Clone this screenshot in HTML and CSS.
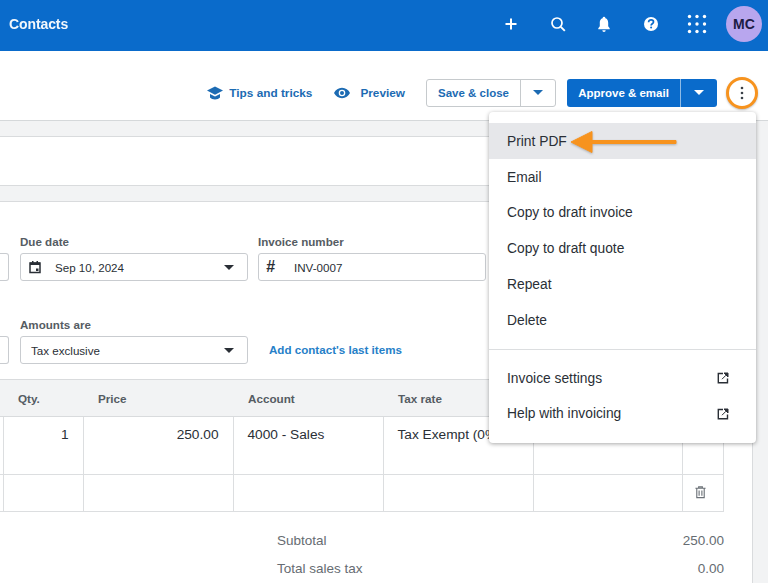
FILE: index.html
```html
<!DOCTYPE html>
<html lang="en">
<head>
<meta charset="utf-8">
<title>Invoice</title>
<link rel="stylesheet" href="styles.css">
</head>
<body>
<div class="page">
  <header class="topbar">
    <div class="brand">Contacts</div>
    <div class="top-icons">
      <svg class="ti" viewBox="0 0 24 24"><path d="M12 6.5v11M6.5 12h11" fill="none" stroke="#fff" stroke-width="2"/></svg>
      <svg class="ti" viewBox="0 0 24 24"><circle cx="11" cy="11" r="5" fill="none" stroke="#fff" stroke-width="1.7"/><path d="M14.8 14.8l4 4" stroke="#fff" stroke-width="1.9" fill="none"/></svg>
      <svg class="ti" viewBox="0 0 24 24"><path d="M12 6c-3 0-4.2 2.3-4.2 5v3.2L6.3 16.2v1h11.4v-1l-1.5-2V11c0-2.700-1.200-5-4.200-5z" fill="#fff"/><circle cx="12" cy="6" r="1.300" fill="#fff"/><path d="M10.300 18.200h3.400a1.700 1.700 0 0 1-3.400 0z" fill="#fff"/></svg>
      <svg class="ti" viewBox="0 0 24 24"><circle cx="12" cy="12" r="7" fill="#fff"/><path d="M9.600 10.200c0-1.500 1.100-2.300 2.500-2.300s2.400.8 2.400 2c0 1.800-2.400 1.800-2.400 3.500" fill="none" stroke="#0a6bcb" stroke-width="1.700"/><circle cx="12.100" cy="15.600" r="1" fill="#0a6bcb"/></svg>
      <svg class="ti" viewBox="0 0 24 24" fill="#fff"><circle cx="4.500" cy="4.500" r="1.700"/><circle cx="12" cy="4.500" r="1.700"/><circle cx="19.500" cy="4.500" r="1.700"/><circle cx="4.500" cy="12" r="1.700"/><circle cx="12" cy="12" r="1.700"/><circle cx="19.500" cy="12" r="1.700"/><circle cx="4.500" cy="19.500" r="1.700"/><circle cx="12" cy="19.500" r="1.700"/><circle cx="19.500" cy="19.500" r="1.700"/></svg>
      <div class="avatar">MC</div>
    </div>
  </header>

  <div class="actionbar">
    <a class="action-link">
      <svg class="ai" viewBox="0 0 16 16"><path d="M8 1.500L0 5.500l8 4.200 8-4.200z" fill="#1c6bb3"/><path d="M3 9v3.500c1 1.300 3 2 5 2s4-.7 5-2V9l-5 2.600z" fill="#1c6bb3"/></svg>
      <span>Tips and tricks</span>
    </a>
    <a class="action-link preview-link">
      <svg class="ai" viewBox="0 0 16 16"><path fill-rule="evenodd" d="M8 2.800C4.500 2.800 1.500 5 0 8c1.500 3 4.500 5.200 8 5.200s6.500-2.200 8-5.200c-1.500-3-4.500-5.200-8-5.200zm0 8.500A3.300 3.300 0 1 1 8 4.700a3.300 3.300 0 0 1 0 6.600z" fill="#1c6bb3"/><circle cx="8" cy="8" r="2" fill="#1c6bb3"/></svg>
      <span>Preview</span>
    </a>
    <div class="split split-light">
      <span class="split-label">Save &amp; close</span>
      <span class="split-arrow"><i class="caret caret-blue"></i></span>
    </div>
    <div class="split split-blue">
      <span class="split-label">Approve &amp; email</span>
      <span class="split-arrow"><i class="caret caret-white"></i></span>
    </div>
    <div class="kebab">
      <svg viewBox="0 0 4 14" class="kebab-dots"><circle cx="2" cy="2" r="1.300"/><circle cx="2" cy="7" r="1.300"/><circle cx="2" cy="12" r="1.300"/></svg>
    </div>
  </div>

  <main class="sheet">
    <div class="band band-one"></div>
    <div class="blank"></div>
    <div class="band band-two"></div>

    <section class="form">
      <div class="form-row">
        <div class="input stub"></div>
        <div class="field">
          <label class="label">Due date</label>
          <div class="input">
            <svg class="cal" viewBox="0 0 14 14"><path d="M2 3h10v9.500H2z" fill="none" stroke="#2a2f36" stroke-width="1.500"/><path d="M2 2.500h10V5H2zM4 1h1.500v2H4zM8.500 1H10v2H8.500zM8 8.500h2.500v2.500H8z" fill="#2a2f36"/></svg>
            <span class="val val-date">Sep 10, 2024</span>
            <i class="caret caret-dark"></i>
          </div>
        </div>
        <div class="field">
          <label class="label">Invoice number</label>
          <div class="input">
            <span class="hash">#</span>
            <span class="val">INV-0007</span>
          </div>
        </div>
      </div>
      <div class="form-row row-second">
        <div class="input stub"></div>
        <div class="field">
          <label class="label">Amounts are</label>
          <div class="input input-plain">
            <span class="val">Tax exclusive</span>
            <i class="caret caret-dark"></i>
          </div>
        </div>
        <a class="add-link">Add contact's last items</a>
      </div>
    </section>

    <table class="lines">
      <colgroup>
        <col class="c0"><col class="c1"><col class="c2"><col class="c2"><col class="c2"><col class="c5"><col class="c6">
      </colgroup>
      <thead>
        <tr><th></th><th>Qty.</th><th>Price</th><th>Account</th><th>Tax rate</th><th></th><th></th></tr>
      </thead>
      <tbody>
        <tr class="row-tall"><td></td><td class="num">1</td><td class="num">250.00</td><td>4000 - Sales</td><td class="clip">Tax Exempt (0%)</td><td></td><td></td></tr>
        <tr class="row-short"><td></td><td></td><td></td><td></td><td></td><td></td>
          <td class="trash-cell"><svg class="trash" viewBox="0 0 14 14"><path d="M1.500 3h11M5 3V1.500h4V3M3 3.500v9.500h8V3.500M5.500 5.500v5.500M8.500 5.500v5.500" fill="none" stroke="#6b7177" stroke-width="1.200"/></svg></td>
        </tr>
      </tbody>
    </table>

    <section class="totals">
      <div class="total-row"><span>Subtotal</span><span>250.00</span></div>
      <div class="total-row"><span>Total sales tax</span><span>0.00</span></div>
    </section>
  </main>

  <nav class="menu">
    <a class="item item-active">Print PDF</a>
    <a class="item">Email</a>
    <a class="item">Copy to draft invoice</a>
    <a class="item">Copy to draft quote</a>
    <a class="item">Repeat</a>
    <a class="item">Delete</a>
    <div class="divider"></div>
    <a class="item">Invoice settings
      <svg class="ext" viewBox="0 0 12 12"><path d="M6 1.500H1.300v9.200h9.200V6.500" fill="none" stroke="#2a2f36" stroke-width="1.400"/><path d="M5 7.200l4-4M7 1h4v4z" fill="#2a2f36" stroke="#2a2f36" stroke-width="1"/></svg>
    </a>
    <a class="item">Help with invoicing
      <svg class="ext" viewBox="0 0 12 12"><path d="M6 1.500H1.300v9.200h9.200V6.500" fill="none" stroke="#2a2f36" stroke-width="1.400"/><path d="M5 7.200l4-4M7 1h4v4z" fill="#2a2f36" stroke="#2a2f36" stroke-width="1"/></svg>
    </a>
  </nav>

  <svg class="arrow" viewBox="0 0 110 26"><path d="M1 13L22 2.500V11.500H106V14.500H22V23.500z" fill="#f7931e" stroke="#f7931e" stroke-linejoin="round"/></svg>
</div>
</body>
</html>
```

FILE: styles.css
```css
* { box-sizing: border-box; }
html, body { margin: 0; padding: 0; }
body {
  width: 768px;
  height: 583px;
  overflow: hidden;
  font-family: "Liberation Sans", Arial, sans-serif;
  color: #2a2f36;
  background: #f2f3f4;
}
.page { position: relative; width: 768px; height: 583px; overflow: hidden; }

.topbar {
  height: 51px;
  background: #0a6bcb;
  display: flex;
  align-items: center;
  justify-content: space-between;
  padding: 0 6px 3px 9px;
}
.brand { color: #fff; font-size: 14px; font-weight: 700; opacity: .95; letter-spacing: -.1px; }
.top-icons { display: flex; align-items: center; }
.ti { width: 24px; height: 24px; margin-right: 22.5px; display: block; }
.ti:nth-child(5) { margin-right: 17px; }
.avatar {
  width: 36px;
  height: 36px;
  border-radius: 50%;
  background: #b8a6ee;
  color: #1d1c44;
  font-size: 14px;
  font-weight: 700;
  display: flex;
  align-items: center;
  justify-content: center;
}

.actionbar {
  height: 70px;
  background: #fff;
  border-bottom: 1px solid #d5d8da;
  display: flex;
  align-items: center;
  justify-content: flex-end;
  padding: 14px 10px 0 0;
}
.action-link {
  display: flex;
  align-items: center;
  font-size: 11.8px;
  font-weight: 700;
  color: #1c6bb3;
  margin-right: 22px;
}
.ai { width: 16px; height: 16px; margin-right: 6px; display: block; }
.preview-link { margin-right: 21px; }
.preview-link .ai { margin-right: 10px; }
.split {
  height: 28px;
  display: flex;
  align-items: stretch;
  font-size: 11.5px;
  font-weight: 700;
  border-radius: 3px;
}
.split-light { width: 130px; border: 1px solid #c6cacd; color: #1c6bb3; background: #fff; margin-right: 11px; }
.split-light .split-label { width: 94px; border-right: 1px solid #c6cacd; }
.split-blue { width: 150px; background: #0a6bcb; color: #fff; margin-right: 9px; }
.split-blue .split-label { width: 114px; border-right: 1px solid #8fbbe6; }
.split-label { display: flex; align-items: center; justify-content: center; }
.split-arrow { flex: 1; display: flex; align-items: center; justify-content: center; }
.caret { display: block; width: 0; height: 0; border-left: 5px solid transparent; border-right: 5px solid transparent; border-top: 5px solid; }
.caret-blue { color: #1c6bb3; }
.caret-white { color: #fff; }
.caret-dark { color: #2a2f36; margin-left: auto; }

.kebab {
  width: 32px;
  height: 32px;
  border: 3px solid #f7931e;
  border-radius: 50%;
  background: #fff;
  display: flex;
  align-items: center;
  justify-content: center;
  box-shadow: 0 1px 2px rgba(0,0,0,.25);
}
.kebab-dots { width: 4px; height: 14px; fill: #3a4048; display: block; }

.sheet {
  width: 753px;
  height: 462px;
  background: #fff;
  border-right: 1px solid #d9dbdd;
  overflow: hidden;
}
.band { background: #f2f3f4; border-bottom: 1px solid #d9dbdd; }
.band-one { height: 16px; }
.blank { height: 48px; }
.band-two { height: 17px; border-top: 1px solid #d9dbdd; }

.form { height: 177px; padding-top: 32px; }
.form-row { display: flex; align-items: flex-end; height: 47px; }
.row-second { margin-top: 36px; }
.field { width: 228px; margin-right: 10px; flex: none; }
.label { display: block; font-size: 11.6px; line-height: 15px; font-weight: 700; color: #555c63; margin-bottom: 4px; }
.input {
  height: 28px;
  border: 1px solid #c9ccd0;
  border-radius: 3px;
  background: #fff;
  display: flex;
  align-items: center;
  padding: 0 13px 0 7px;
  font-size: 11.6px;
  color: #2a2f36;
}
.stub { width: 9px; margin-right: 11px; padding: 0; border-left: 0; border-radius: 0 3px 3px 0; flex: none; }
.input-plain { padding-left: 10px; }
.cal { width: 14px; height: 14px; flex: none; margin-right: 13px; display: block; }
.hash { font-size: 16px; font-style: italic; font-weight: 700; width: 28px; flex: none; }
.val { white-space: nowrap; }
.add-link { font-size: 11.6px; font-weight: 700; color: #2680c8; height: 28px; line-height: 28px; white-space: nowrap; margin-left: 11px; }

.lines { width: 723px; border-collapse: collapse; table-layout: fixed; font-size: 13.7px; }
.c0 { width: 3px; }
.c1 { width: 80px; }
.c2 { width: 150px; }
.c5 { width: 149px; }
.c6 { width: 41px; }
.lines th {
  height: 37px;
  background: #f2f3f4;
  border-top: 1px solid #d9dbdd;
  border-bottom: 1px solid #d9dbdd;
  text-align: left;
  font-size: 11.7px;
  font-weight: 700;
  color: #555c63;
  padding: 0 0 0 15px;
}
.lines th:first-child, .lines td:first-child { padding: 0; }
.lines td {
  border: 1px solid #dcdee0;
  vertical-align: top;
  padding: 10px 14px 9px;
  color: #2a2f36;
  white-space: nowrap;
  overflow: hidden;
}
.lines td:first-child { border-left: 0; }
.row-tall td { height: 58px; }
.row-short td { height: 37px; }
.lines td.num { text-align: right; }
.lines td.trash-cell { padding: 10px 4px 0 0; text-align: center; }
.trash { width: 13px; height: 14px; display: block; margin: 0 auto; }

.totals { width: 724px; padding: 21px 0 0 277px; }
.total-row {
  display: flex;
  justify-content: space-between;
  font-size: 13.5px;
  line-height: 16px;
  height: 28px;
  color: #666c72;
}

.menu {
  position: absolute;
  left: 489px;
  top: 112px;
  width: 267px;
  height: 331px;
  background: #fff;
  border-radius: 4px;
  box-shadow: 0 1px 4px rgba(0,0,0,.35);
  padding-top: 11px;
}
.item {
  height: 35.8px;
  display: flex;
  align-items: center;
  justify-content: space-between;
  padding: 1px 27px 0 18px;
  font-size: 13.8px;
  color: #2a2f36;
}
.item-active { background: #e6e7ea; }
.divider { height: 1px; background: #dcdee0; margin: 11px 0 10px; }
.ext { width: 12px; height: 12px; display: block; }

.arrow {
  position: absolute;
  left: 570px;
  top: 129px;
  width: 110px;
  height: 26px;
  filter: drop-shadow(0 1px 1px rgba(0,0,0,.25));
}
```
